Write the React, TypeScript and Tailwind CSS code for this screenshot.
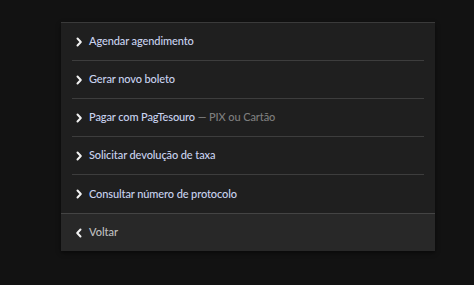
import React from "react";

const Chevron = ({ left = false }: { left?: boolean }) => (
  <svg width="8" height="10" viewBox="0 0 8 10" className="shrink-0">
    <path
      d={left ? "M5.5 1.5 L2.2 5 L5.5 8.5" : "M2.5 1.5 L5.8 5 L2.5 8.5"}
      fill="none"
      stroke="#f2f2f2"
      strokeWidth="2"
      strokeLinecap="round"
      strokeLinejoin="round"
    />
  </svg>
);

const items: { label: string; extra?: string }[] = [
  { label: "Agendar agendimento" },
  { label: "Gerar novo boleto" },
  { label: "Pagar com PagTesouro", extra: " — PIX ou Cartão" },
  { label: "Solicitar devolução de taxa" },
  { label: "Consultar número de protocolo" },
];

export default function App() {
  return (
    <div
      className="w-[474px] h-[285px] bg-[#121212] pt-[22px] pl-[61px]"
      style={{ fontFamily: "Lato, 'Open Sans', sans-serif" }}
    >
      <div className="w-[374px] bg-[#1f1f1f] border-t border-[#3a3a3a] shadow-[0_2px_4px_rgba(0,0,0,0.5)]">
        <div className="px-[11px]">
          {items.map((it, i) => (
            <div
              key={i}
              className={`h-[38px] flex items-center gap-[6px] pl-[3px] ${
                i < items.length - 1 ? "border-b border-[#3d3d3d]" : ""
              }`}
            >
              <Chevron />
              <span className="text-[11px] font-medium tracking-[-0.1px] text-[#c9d3f0] whitespace-nowrap">
                {it.label}
                {it.extra && <span className="text-[#7e7e7e]">{it.extra}</span>}
              </span>
            </div>
          ))}
        </div>
        <div className="h-[38px] border-t border-[#444444] bg-[#282828] flex items-center gap-[6px] pl-[14px]">
          <Chevron left />
          <span className="text-[11px] font-medium text-[#c0c0c0]">Voltar</span>
        </div>
      </div>
    </div>
  );
}
